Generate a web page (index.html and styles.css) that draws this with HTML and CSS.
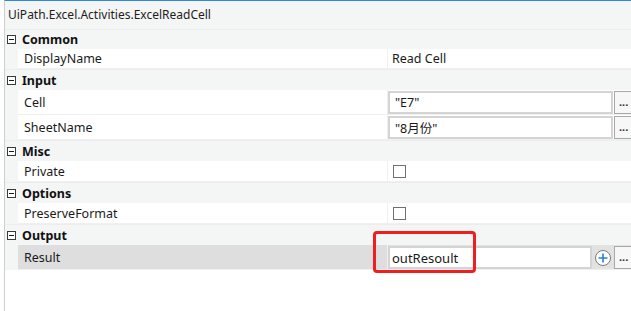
FILE: index.html
```html
<!DOCTYPE html>
<html>
<head>
<meta charset="utf-8">
<link rel="stylesheet" href="styles.css">
</head>
<body>
<div class="frame">
  <div class="title">UiPath.Excel.Activities.ExcelReadCell</div>
  <div class="grid">
    <div class="cat cat-first"><span class="exp"></span><span class="cat-label">Common</span></div>
    <div class="prop prop-first">
      <div class="strip"></div>
      <div class="name">DisplayName</div>
      <div class="value"><span class="plain">Read Cell</span></div>
    </div>

    <div class="cat"><span class="exp"></span><span class="cat-label">Input</span></div>
    <div class="prop tall">
      <div class="strip"></div>
      <div class="name">Cell</div>
      <div class="value">
        <div class="box">"E7"</div>
        <div class="dots">...</div>
      </div>
    </div>
    <div class="prop tall">
      <div class="strip"></div>
      <div class="name">SheetName</div>
      <div class="value">
        <div class="box">"8月份"</div>
        <div class="dots">...</div>
      </div>
    </div>

    <div class="cat"><span class="exp"></span><span class="cat-label">Misc</span></div>
    <div class="prop">
      <div class="strip"></div>
      <div class="name">Private</div>
      <div class="value"><span class="check"></span></div>
    </div>

    <div class="cat"><span class="exp"></span><span class="cat-label">Options</span></div>
    <div class="prop">
      <div class="strip"></div>
      <div class="name">PreserveFormat</div>
      <div class="value"><span class="check"></span></div>
    </div>

    <div class="cat"><span class="exp"></span><span class="cat-label">Output</span></div>
    <div class="prop tall selected">
      <div class="strip"></div>
      <div class="name">Result</div>
      <div class="value">
        <div class="box box-result">outResoult</div>
        <div class="plus">
          <svg width="18" height="18" viewBox="0 0 18 18">
            <circle cx="9" cy="9" r="7.5" fill="#fff" stroke="#7a7a7a" stroke-width="1"/>
            <path d="M9 4.5V13.5M4.5 9H13.5" stroke="#2b7fd6" stroke-width="1.6"/>
          </svg>
        </div>
        <div class="dots">...</div>
        <div class="highlight"></div>
      </div>
    </div>
  </div>
</div>
</body>
</html>
```

FILE: styles.css
```css
html, body {
  margin: 0;
  padding: 0;
  background: #ffffff;
}

body {
  font-family: "Noto Sans", "Noto Sans CJK SC", sans-serif;
  font-size: 12px;
  color: #1a1a1a;
  width: 631px;
  height: 311px;
  overflow: hidden;
}

.frame {
  margin-left: 4px;
  border-left: 1px solid #cfcfcf;
  border-top: 1px solid #2f86e0;
  height: 310px;
  background: #ffffff;
}

.title {
  height: 28px;
  line-height: 27px;
  padding-left: 3px;
  background: #f4f5f5;
  font-size: 12px;
  color: #1e1e1e;
}

.grid {
  display: flex;
  flex-direction: column;
}

.cat {
  height: 21px;
  display: flex;
  align-items: center;
  background: #f4f5f5;
  border-top: 1px solid #eceeee;
  box-sizing: border-box;
}

.cat-first {
  height: 20px;
}

.exp {
  width: 9px;
  height: 9px;
  margin-left: 2px;
  margin-right: 6px;
  border: 1px solid #3a3a3a;
  box-sizing: border-box;
  display: flex;
  align-items: center;
  justify-content: center;
  background: #fff;
}

.exp::after {
  content: "";
  width: 5px;
  height: 1px;
  background: #1a1a1a;
}

.cat-label {
  font-weight: bold;
  font-size: 12.5px;
  color: #111;
}

.prop {
  height: 21px;
  display: flex;
  background: #f4f5f5;
}

.prop-first {
  height: 20px;
}

.prop.tall {
  height: 25px;
}

.strip {
  width: 13px;
  flex: none;
  background: #f4f5f5;
}

.name {
  width: 370px;
  flex: none;
  background: #ffffff;
  border-right: 1px solid #f0f0f0;
  border-bottom: 1px solid #f0f0f0;
  padding-left: 6px;
  box-sizing: border-box;
  display: flex;
  align-items: center;
  font-size: 12.5px;
}

.value {
  flex: 1;
  background: #ffffff;
  border-bottom: 1px solid #f0f0f0;
  display: flex;
  align-items: center;
  position: relative;
  min-width: 0;
}

.plain {
  padding-left: 4px;
  font-size: 12.5px;
}

.box {
  width: 225px;
  height: 23px;
  box-sizing: border-box;
  border: 2px solid #d4d4d4;
  background: #ffffff;
  padding-left: 5px;
  display: flex;
  align-items: center;
  font-size: 12.5px;
  flex: none;
  align-self: flex-start;
  margin-top: 1px;
}

.box-result {
  width: 204px;
  padding-left: 2px;
  font-size: 13px;
}

.dots {
  width: 22px;
  height: 23px;
  margin-left: 1px;
  box-sizing: border-box;
  border: 1px solid #a8a8a8;
  background: #f7f7f7;
  flex: none;
  align-self: flex-start;
  margin-top: 1px;
  font-size: 11px;
  font-weight: bold;
  line-height: 20px;
  padding-left: 4px;
  color: #333;
}

.plus {
  width: 21px;
  height: 23px;
  flex: none;
  align-self: flex-start;
  margin-top: 1px;
  display: flex;
  align-items: center;
  justify-content: center;
  background: #e2e2e2;
}

.check {
  width: 13px;
  height: 13px;
  box-sizing: border-box;
  border: 1px solid #707070;
  background: #fff;
  margin-left: 5px;
}

.selected .name {
  background: #dedede;
}

.selected .value {
  background: #e2e2e2;
}

.highlight {
  position: absolute;
  left: -15px;
  top: -14px;
  width: 103px;
  height: 42px;
  box-sizing: border-box;
  border: 3px solid #ef1f1f;
  border-radius: 4px;
}
```
